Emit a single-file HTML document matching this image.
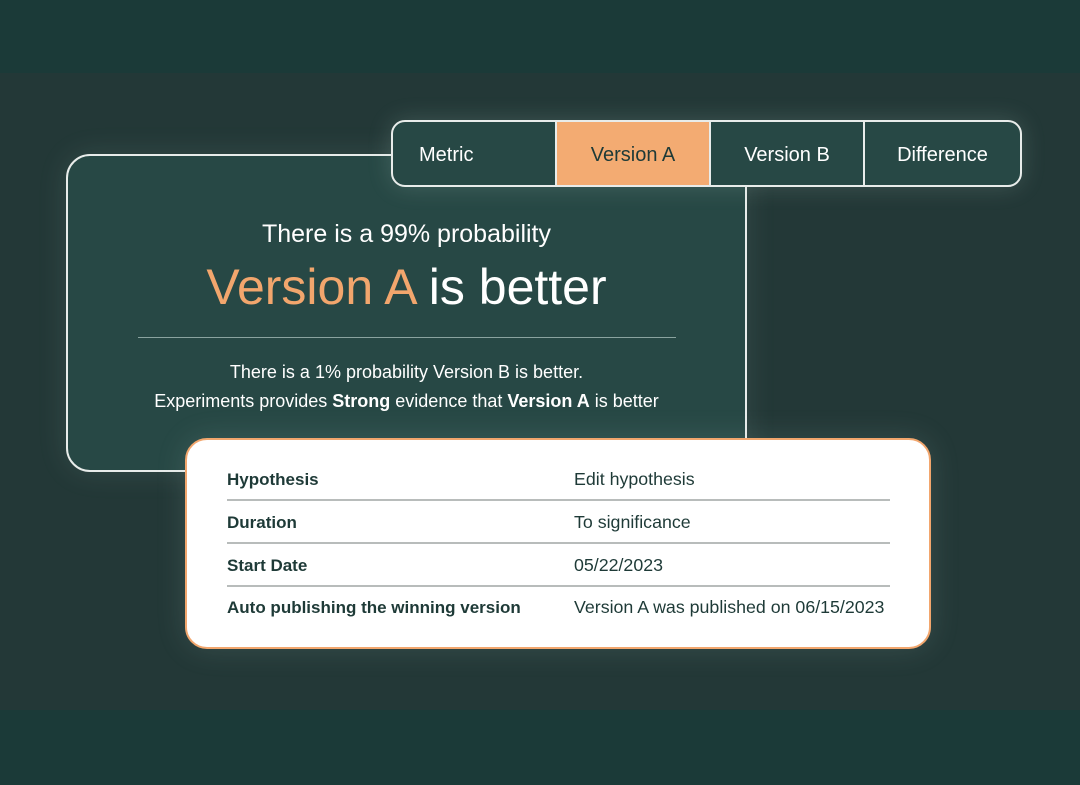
<!DOCTYPE html>
<html><head><style>
*{margin:0;padding:0;box-sizing:border-box}
body{width:1080px;height:785px;overflow:hidden;font-family:"Liberation Sans",sans-serif;background:#233837;position:relative}
.band{position:absolute;left:0;width:1080px;background:#1b3a38}
.card{position:absolute;left:66px;top:154px;width:681px;height:318px;background:#274845;border:2px solid #e8ecea;border-radius:24px 0 0 24px;box-shadow:0 0 30px rgba(180,210,200,.12)}
.tabs{position:absolute;left:391px;top:120px;width:631px;height:67px;border:2px solid #e8ecea;border-radius:14px;background:#274845;display:flex;overflow:hidden;box-shadow:0 0 24px rgba(180,210,200,.2)}
.tabs div{height:100%;display:flex;align-items:center;justify-content:center;color:#fff;font-size:20px;border-right:2px solid #e8ecea;padding-top:3px}
.tabs div:last-child{border-right:none}
.t{position:absolute;width:100%;text-align:center;color:#fff;left:0}
.white{position:absolute;left:185px;top:438px;width:746px;height:211px;background:#fff;border:2px solid #f2a66d;border-radius:22px;box-shadow:0 0 30px rgba(180,210,200,.15)}
.row{position:absolute;left:40px;width:663px;font-size:17px;color:#1e3a37}
.row b{position:absolute;left:0}
.row span{position:absolute;left:347px;font-size:17.8px;top:-1px}
.ln{position:absolute;left:40px;width:663px;height:2px;background:#b8bcbb}
</style></head><body>
<div class="band" style="top:0;height:73px"></div>
<div class="band" style="top:710px;height:75px"></div>
<div class="card">
<div class="t" style="top:64px;font-size:25px">There is a 99% probability</div>
<div class="t" style="top:102px;font-size:50px"><span style="color:#f2a66d">Version A</span> is better</div>
<div style="position:absolute;left:70px;top:181px;width:538px;height:1px;background:#8aa39f"></div>
<div class="t" style="top:206px;font-size:18px">There is a 1% probability Version B is better.</div>
<div class="t" style="top:235px;font-size:18px">Experiments provides <b>Strong</b> evidence that <b>Version A</b> is better</div>
</div>
<div class="tabs">
<div style="width:164px;justify-content:flex-start;padding-left:26px">Metric</div>
<div style="width:154px;background:#f3ab72;color:#1e3a37">Version A</div>
<div style="width:154px">Version B</div>
<div style="flex:1">Difference</div>
</div>
<div class="white">
<div class="row" style="top:30px"><b>Hypothesis</b><span>Edit hypothesis</span></div>
<div class="ln" style="top:59px"></div>
<div class="row" style="top:73px"><b>Duration</b><span>To significance</span></div>
<div class="ln" style="top:102px"></div>
<div class="row" style="top:116px"><b>Start Date</b><span>05/22/2023</span></div>
<div class="ln" style="top:145px"></div>
<div class="row" style="top:158px"><b>Auto publishing the winning version</b><span>Version A was published on 06/15/2023</span></div>
</div>
</body></html>
